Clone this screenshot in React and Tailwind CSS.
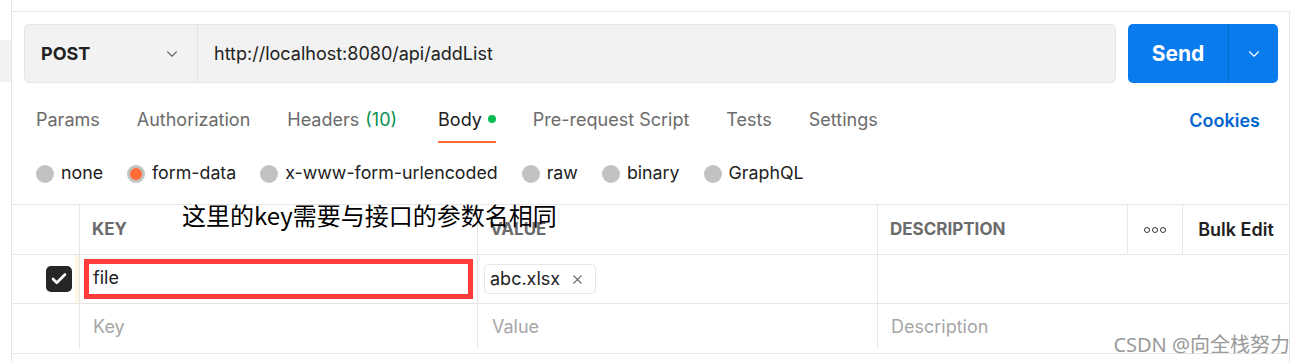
import React from "react";
import { ChevronDown, X, Check } from "lucide-react";

const tabs = [
  { label: "Params" },
  { label: "Authorization" },
  { label: "Headers", count: "(10)" },
  { label: "Body", active: true },
  { label: "Pre-request Script" },
  { label: "Tests" },
  { label: "Settings" },
];

const bodyTypes = ["none", "form-data", "x-www-form-urlencoded", "raw", "binary", "GraphQL"];

const font = { fontFamily: "Inter, 'Noto Sans', sans-serif" };

const Radio = ({ checked }) => (
  <span className="w-[18px] h-[18px] rounded-full bg-[#c2c2c2] flex items-center justify-center shrink-0">
    {checked && <span className="w-[12px] h-[12px] rounded-full bg-[#ff6c37]" />}
  </span>
);

const App = () => {
  return (
    <div className="relative w-[1302px] h-[363px] bg-white overflow-hidden flex text-[#212121]" style={font}>
      {/* bande gauche */}
      <div className="w-[11px] shrink-0 flex flex-col">
        <div className="h-[40px]" />
        <div className="h-[42px] bg-[#f2f2f2]" />
      </div>

      {/* zone principale */}
      <div className="w-[1279px] shrink-0 flex flex-col">
        <div className="h-[11px] border-l border-[#e6e6e6]" />
        <div className="flex-1 border-l border-r border-t border-[#e6e6e6] flex flex-col">
          {/* URL */}
          <div className="flex pl-3 pr-[11px] pt-3 h-[71px]">
            <div className="flex flex-1 h-[59px] bg-[#f2f2f2] border border-[#e6e6e6] rounded-[5px]">
              <div className="w-[173px] flex items-center justify-between pl-4 pr-4 border-r border-[#e3e3e3]">
                <span className="text-[18px] font-bold">POST</span>
                <ChevronDown size={18} strokeWidth={1.5} className="text-[#6b6b6b]" />
              </div>
              <div className="flex items-center pl-4 text-[18px]">http://localhost:8080/api/addList</div>
            </div>
            <div className="ml-3 w-[150px] h-[59px] flex rounded-[5px] bg-[#097bed] text-white">
              <div className="w-[101px] flex items-center justify-center text-[21px] font-bold border-r border-[#0a6ccf]">Send</div>
              <div className="flex-1 flex items-center justify-center">
                <ChevronDown size={18} strokeWidth={1.5} />
              </div>
            </div>
          </div>

          {/* onglets */}
          <div className="flex items-stretch h-[46px] mt-[14px] pl-6 pr-[29px] text-[18px]">
            <div className="flex gap-[37px]">
              {tabs.map((t) => (
                <div
                  key={t.label}
                  className={
                    t.active
                      ? "flex items-center gap-[6px] border-b-2 border-[#ff6c37] ml-[4px] text-[#212121]"
                      : "flex items-center gap-[6px] border-b-2 border-transparent text-[#6b6b6b]"
                  }
                >
                  <span>{t.label}</span>
                  {t.count && <span className="text-[#0a8f52]">{t.count}</span>}
                  {t.active && <span className="w-[8px] h-[8px] rounded-full bg-[#0cbb52]" />}
                </div>
              ))}
            </div>
            <div className="ml-auto flex items-center text-[#0265d2] font-semibold">Cookies</div>
          </div>

          {/* types de corps */}
          <div className="flex items-center h-[61px] px-6 gap-[24px] text-[17.8px]">
            {bodyTypes.map((b) => (
              <div key={b} className="flex items-center gap-[7px]">
                <Radio checked={b === "form-data"} />
                <span>{b}</span>
              </div>
            ))}
          </div>

          {/* tableau */}
          <div className="border-t border-b border-[#e6e6e6] text-[18px]">
            <div className="flex h-[50px] border-b border-[#e6e6e6]">
              <div className="w-[68px] border-r border-[#e6e6e6]" />
              <div className="w-[398px] border-r border-[#e6e6e6] flex items-center pl-3 text-[17px] font-bold text-[#6b6b6b]">KEY</div>
              <div className="w-[400px] border-r border-[#e6e6e6] flex items-center pl-3 text-[17px] font-bold text-[#6b6b6b]">VALUE</div>
              <div className="w-[250px] border-r border-[#e6e6e6] flex items-center pl-3 text-[17px] font-bold text-[#6b6b6b]">DESCRIPTION</div>
              <div className="w-[55px] border-r border-[#e6e6e6] flex items-center justify-center gap-[2px]">
                <span className="w-[6px] h-[6px] rounded-full border-[1.5px] border-[#3a3a3a]" />
                <span className="w-[6px] h-[6px] rounded-full border-[1.5px] border-[#3a3a3a]" />
                <span className="w-[6px] h-[6px] rounded-full border-[1.5px] border-[#3a3a3a]" />
              </div>
              <div className="flex-1 flex items-center justify-center font-semibold">Bulk Edit</div>
            </div>

            <div className="flex h-[49px] border-b border-[#e6e6e6]">
              <div className="w-[68px] border-r border-[#e6e6e6] flex items-center justify-end">
                <span className="w-[26px] h-[26px] rounded-[5px] bg-[#262626] flex items-center justify-center">
                  <Check size={18} strokeWidth={3.5} className="text-white" />
                </span>
                <span className="w-[4px] h-full ml-[3px] bg-[#fdf6e3]" />
              </div>
              <div className="w-[398px] border-r border-[#e6e6e6] p-[4px]">
                <div className="h-full border-[5px] border-[#ff3b3b] flex items-center pb-[3px] pl-[4px]">file</div>
              </div>
              <div className="w-[400px] border-r border-[#e6e6e6] flex items-center pl-[6px]">
                <div className="h-[30px] flex items-center gap-[10px] pl-[5px] pr-[10px] pb-[2px] border border-[#e6e6e6] rounded-[5px]">
                  <span>abc.xlsx</span>
                  <X size={15} strokeWidth={1.75} className="text-[#6b6b6b] mt-[2px]" />
                </div>
              </div>
              <div className="flex-1" />
            </div>

            <div className="flex h-[49px] pb-[5px] text-[#a6a6a6]">
              <div className="w-[68px] border-r border-[#e6e6e6]" />
              <div className="w-[398px] border-r border-[#e6e6e6] flex items-center pl-[13px]">Key</div>
              <div className="w-[400px] border-r border-[#e6e6e6] flex items-center pl-[14px]">Value</div>
              <div className="flex-1 flex items-center pl-[13px]">Description</div>
            </div>
          </div>
        </div>
      </div>

      {/* annotation */}
      <div
        className="absolute left-[182px] top-[203px] text-[24px] text-black leading-none"
        style={{ fontFamily: "'Noto Sans CJK SC', 'Noto Sans', sans-serif" }}
      >
        这里的key需要与接口的参数名相同
      </div>

      {/* filigrane */}
      <div
        className="absolute right-[12px] top-[335px] text-[20px] text-[#9a9a9a] leading-none"
        style={{ fontFamily: "'Noto Sans', 'Noto Sans CJK SC', sans-serif" }}
      >
        CSDN @向全栈努力
      </div>
    </div>
  );
};

export default App;
